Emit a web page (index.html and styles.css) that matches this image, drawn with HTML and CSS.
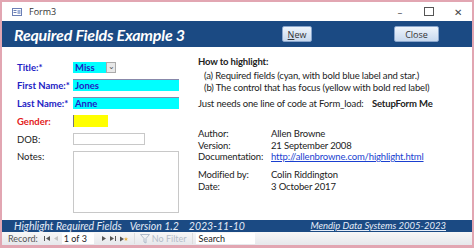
FILE: index.html
```html
<!DOCTYPE html>
<html lang="en">
<head>
    <meta charset="UTF-8">
    <title>Form3</title>
    <link rel="stylesheet" href="styles.css">
</head>
<body>
<div class="window">
    <div class="titlebar">
        <svg class="app-icon" width="10" height="8" viewBox="0 0 10 8">
            <rect x="0.5" y="0.5" width="9" height="7" fill="#fff" stroke="#6b7fb5"/>
            <rect x="1.5" y="2" width="3" height="1" fill="#6b7fb5"/>
            <rect x="1.5" y="4" width="3" height="1" fill="#6b7fb5"/>
            <rect x="5.5" y="2" width="3" height="4" fill="#9fb0d8"/>
        </svg>
        <span class="caption">Form3</span>
        <div class="controls">
            <span class="ctl">&#8211;</span>
            <span class="ctl ctl-max"></span>
            <span class="ctl">&#10005;</span>
        </div>
    </div>

    <div class="header">
        <h1>Required Fields Example 3</h1>
        <button class="btn btn-new"><u>N</u>ew</button>
        <button class="btn btn-close">Close</button>
    </div>

    <div class="content">
        <div class="form">
            <label class="req">Title:*</label>
            <div class="combo"><span class="combo-val">Miss</span><span class="combo-btn">&#8964;</span></div>
            <label class="req">First Name:*</label>
            <div class="field req-field wide">Jones</div>
            <label class="req">Last Name:*</label>
            <div class="field req-field wide">Anne</div>
            <label class="focus">Gender:</label>
            <div class="field focus-field short"></div>
            <label>DOB:</label>
            <div class="field plain mid"></div>
            <label class="top">Notes:</label>
            <div class="field plain wide notes"></div>
        </div>

        <div class="info">
            <p class="bold head">How to highlight:</p>
            <p class="indent">(a) Required fields (cyan, with bold blue label and star.)</p>
            <p class="indent">(b) The control that has focus (yellow with bold red label)</p>
            <p class="code-line">Just needs one line of code at Form_load: <b>SetupForm Me</b></p>

            <div class="meta">
                <span>Author:</span><span>Allen Browne</span>
                <span>Version:</span><span>21 September 2008</span>
                <span>Documentation:</span><a href="#">http://allenbrowne.com/highlight.html</a>
            </div>
            <div class="meta meta-2">
                <span>Modified by:</span><span>Colin Riddington</span>
                <span>Date:</span><span>3 October 2017</span>
            </div>
        </div>
    </div>

    <div class="footer">
        <span>Highlight Required Fields</span>
        <span class="gap">Version 1.2</span>
        <span class="gap gap-2">2023-11-10</span>
        <span class="mds">Mendip Data Systems 2005-2023</span>
    </div>

    <div class="navbar">
        <span class="rec">Record:</span>
        <svg class="nav-ico" width="6" height="5" viewBox="0 0 6 5">
            <rect x="0" y="0" width="1" height="5" fill="#555"/>
            <path d="M6 0 V5 L2 2.5 Z" fill="#555"/>
        </svg>
        <svg class="nav-ico" width="4" height="5" viewBox="0 0 4 5">
            <path d="M4 0 V5 L0 2.5 Z" fill="#c4c4c4"/>
        </svg>
        <span class="pos">1 of 3</span>
        <svg class="nav-ico" width="4" height="5" viewBox="0 0 4 5">
            <path d="M0 0 V5 L4 2.5 Z" fill="#555"/>
        </svg>
        <svg class="nav-ico" width="6" height="5" viewBox="0 0 6 5">
            <path d="M0 0 V5 L4 2.5 Z" fill="#555"/>
            <rect x="5" y="0" width="1" height="5" fill="#555"/>
        </svg>
        <svg class="nav-ico" width="8" height="6" viewBox="0 0 8 6">
            <path d="M0 0.5 V5.5 L4 3 Z" fill="#555"/>
            <path d="M6 1 L6.6 2.4 L8 2.5 L6.9 3.4 L7.3 5 L6 4.1 L4.7 5 L5.1 3.4 L4 2.5 L5.4 2.4 Z" fill="#e8b040"/>
        </svg>
        <span class="filter">
            <svg width="10" height="10" viewBox="0 0 10 10">
                <path d="M0.5 0.5 H9.5 L6 4.5 V9 L4 8 V4.5 Z" fill="none" stroke="#b0bccb"/>
            </svg>
            No Filter
        </span>
        <span class="search">Search</span>
    </div>
</div>
</body>
</html>
```

FILE: styles.css
```css
body {
    margin: 0;
    padding: 0;
    font-family: Lato, "Open Sans", sans-serif;
    font-size: 10px;
    color: #222;
    background: #fff;
}

.window {
    width: 474px;
    height: 248px;
    box-sizing: border-box;
    border: 2px solid #e2a6b2;
    border-bottom-width: 3px;
    display: flex;
    flex-direction: column;
    background: #fff;
}

/* title bar */
.titlebar {
    height: 19px;
    display: flex;
    align-items: center;
    padding-left: 10px;
}

.app-icon {
    margin-right: 7px;
}

.caption {
    font-family: "Open Sans", sans-serif;
    font-size: 9px;
    color: #333;
}

.controls {
    margin-left: auto;
    display: flex;
    align-items: center;
}

.ctl {
    width: 28px;
    text-align: center;
    font-size: 10px;
    color: #444;
}

.ctl-max {
    width: 8px;
    height: 7px;
    border: 1px solid #555;
    margin: 0 10px;
}

/* header */
.header {
    height: 26px;
    background: #1b4a83;
    display: flex;
    align-items: center;
    padding-left: 12px;
}

.header h1 {
    margin: 0;
    font-family: Lato, sans-serif;
    font-size: 16px;
    font-weight: bold;
    font-style: italic;
    letter-spacing: -0.2px;
    color: #fff;
    width: 268px;
}

.btn {
    height: 16px;
    padding: 0;
    font-family: "Open Sans", sans-serif;
    font-size: 9px;
    color: #333;
    background: linear-gradient(#eef4fb, #c8d9ee);
    border: 1px solid #8aa6cc;
    border-radius: 2px;
}

.btn-new {
    width: 30px;
}

.btn-close {
    width: 45px;
    margin-left: 82px;
}

/* content */
.content {
    flex: 1;
    display: flex;
}

.form {
    width: 178px;
    padding: 11px 0 0 15px;
    box-sizing: border-box;
    display: grid;
    grid-template-columns: 56px auto;
    grid-auto-rows: 18px;
    align-items: center;
    align-content: start;
}

.form label {
    font-size: 9.5px;
}

.form label.top {
    align-self: start;
    margin-top: 3px;
}

.form .req {
    color: #2121c4;
    font-weight: bold;
}

.form .focus {
    color: #e32020;
    font-weight: bold;
}

.combo {
    display: flex;
    height: 11px;
    width: 43px;
}

.combo-val {
    flex: 1;
    background: #00ffff;
    color: #2121c4;
    font-weight: bold;
    line-height: 11px;
    padding-left: 2px;
    font-size: 9.5px;
}

.combo-btn {
    width: 10px;
    background: #e8e8e8;
    border: 1px solid #aaa;
    box-sizing: border-box;
    font-size: 8px;
    line-height: 6px;
    text-align: center;
    color: #555;
}

.field {
    height: 12px;
    box-sizing: border-box;
    font-size: 9.5px;
    line-height: 11px;
    padding-left: 2px;
}

.req-field {
    background: #00ffff;
    color: #2121c4;
    font-weight: bold;
    border-top: 1px solid #88a;
}

.focus-field {
    background: #ffff00;
    border-left: 1px solid #777;
}

.plain {
    border: 1px solid #c8c8c8;
}

.wide {
    width: 106px;
}

.short {
    width: 35px;
}

.mid {
    width: 72px;
}

.notes {
    height: 62px;
    align-self: start;
    margin-top: 3px;
}

/* info */
.info {
    padding: 9px 0 0 18px;
    font-size: 9.5px;
    line-height: 12px;
    letter-spacing: -0.15px;
}

.info p {
    margin: 0;
}

.bold {
    font-weight: bold;
}

.head {
    margin-bottom: 2px !important;
}

.indent {
    padding-left: 6px;
}

.code-line {
    margin-top: 4px !important;
}

.code-line b {
    margin-left: 6px;
}

.meta {
    display: grid;
    grid-template-columns: 73px auto;
    margin-top: 18px;
    line-height: 11.5px;
}

.meta-2 {
    margin-top: 6px;
    line-height: 12px;
}

.meta a {
    color: #1a3fd0;
}

/* footer */
.footer {
    height: 12px;
    background: #1b4a83;
    color: #e4ecf8;
    font-style: italic;
    font-size: 10.5px;
    line-height: 12px;
    display: flex;
    padding: 0 26px 0 12px;
}

.footer .gap {
    margin-left: 8px;
}

.footer .gap-2 {
    margin-left: 10px;
}

.mds {
    margin-left: auto;
    text-decoration: underline;
    font-size: 9.5px;
}

/* navigation bar */
.navbar {
    height: 13px;
    background: linear-gradient(#f7f7f7, #e6e8ec);
    display: flex;
    align-items: center;
    font-size: 9px;
    color: #555;
    padding-left: 6px;
}

.rec {
    margin-right: 6px;
}

.nav-ico {
    margin-right: 4px;
}

.pos {
    background: #fff;
    color: #222;
    width: 30px;
    margin-right: 8px;
    padding-left: 2px;
}

.filter {
    display: flex;
    align-items: center;
    gap: 2px;
    color: #b4bcc8;
    padding: 0 5px;
    margin-left: 2px;
    border-left: 1px solid #ddd;
    border-right: 1px solid #ddd;
}

.search {
    background: #fff;
    color: #222;
    width: 56px;
    padding-left: 3px;
    margin-left: 3px;
}
```
